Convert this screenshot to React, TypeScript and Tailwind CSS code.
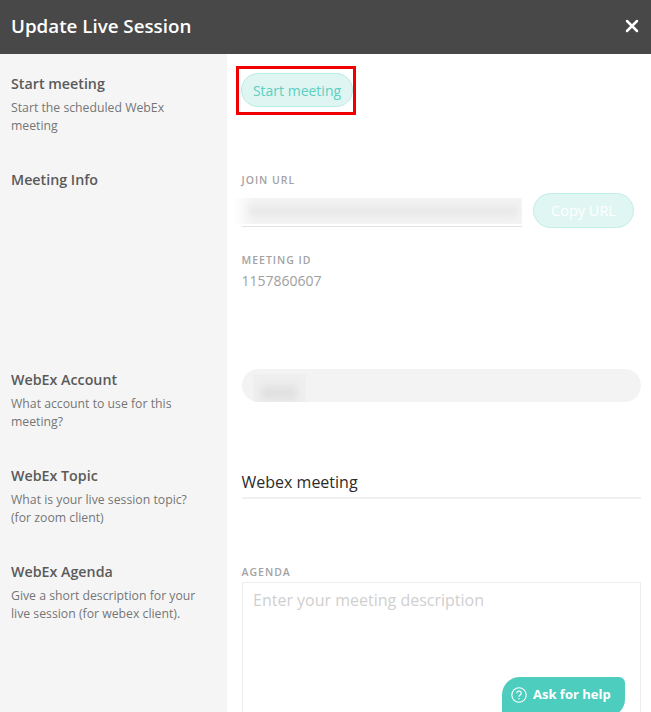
import React from 'react';
import { X } from 'lucide-react';

function SideInfo({ title, children }: { title: string; children?: React.ReactNode }) {
  return (
    <div className="w-[227px] shrink-0 bg-[#f5f5f5] pl-[11px] pr-[28px] pt-[20px]">
      <h3 className="text-[14.25px] leading-[20px] font-semibold text-[#5a5a5a]">{title}</h3>
      {children && <p className="mt-[5px] text-[12.25px] leading-[18px] text-[#757575]">{children}</p>}
    </div>
  );
}

function FieldLabel({ children }: { children: React.ReactNode }) {
  return <div className="text-[10.5px] leading-[14px] font-semibold tracking-[1px] text-[#a3a3a3] uppercase">{children}</div>;
}

export default function App() {
  return (
    <div className="relative h-[712px] w-[651px] overflow-hidden bg-white font-['Open_Sans',sans-serif]">
      <header className="flex h-[54px] items-center justify-between bg-[#484848] pl-[11px] pr-[9.5px]">
        <h1 className="mt-[-2px] text-[18.75px] font-semibold text-white">Update Live Session</h1>
        <X className="mt-[-3px] h-[20px] w-[20px] text-white" strokeWidth={3} />
      </header>

      <div className="flex h-[96px]">
        <SideInfo title="Start meeting">Start the scheduled WebEx meeting</SideInfo>
        <div className="pl-[9px] pt-[12px]">
          <div className="h-[49px] w-[120px] border-[3px] border-[#f00000] pl-[2px] pt-[4px]">
            <button className="h-[34px] w-[112px] rounded-full border border-[#b8ece5] bg-[#def5f2] text-[14px] text-[#5ccfc1]">
              Start meeting
            </button>
          </div>
        </div>
      </div>

      <div className="flex h-[200px]">
        <SideInfo title="Meeting Info" />
        <div className="flex-1 pl-[14.5px] pt-[23px]">
          <FieldLabel>Join URL</FieldLabel>
          <div className="mt-[11px] flex items-start">
            <div className="h-[29px] w-[280px] border-b border-[#e3e3e3]">
              <div className="-ml-[10px] h-[26px] w-[290px] overflow-hidden bg-gradient-to-r from-white to-[#f4f4f4] to-[8%] pt-[7px] pl-[16px]">
                <div className="h-[12px] w-[270px] bg-[#e8e8e8] blur-[4px]" />
              </div>
            </div>
            <button className="ml-[11.5px] mt-[-5px] h-[35px] w-[101px] rounded-full border border-[#c2eee8] bg-[#e0f6f3] text-[14.5px] text-white">
              Copy URL
            </button>
          </div>
          <div className="mt-[25px]">
            <FieldLabel>Meeting ID</FieldLabel>
            <div className="mt-[4px] text-[14px] leading-[20px] text-[#a0a0a0]">1157860607</div>
          </div>
        </div>
      </div>

      <div className="flex h-[96px]">
        <SideInfo title="WebEx Account">What account to use for this meeting?</SideInfo>
        <div className="flex-1 pl-[14.5px] pr-[10px] pt-[19px]">
          <div className="h-[33px] overflow-hidden rounded-full bg-[#f3f3f3] pl-[11px] pt-[5px]">
            <div className="h-[28px] w-[53px] overflow-hidden bg-[#efefef]">
              <div className="ml-[8px] mt-[12px] h-[14px] w-[36px] bg-[#e0e0e0] blur-[4px]" />
            </div>
          </div>
        </div>
      </div>

      <div className="flex h-[96px]">
        <SideInfo title="WebEx Topic">What is your live session topic? (for zoom client)</SideInfo>
        <div className="flex-1 pl-[14.5px] pr-[10px] pt-[23px]">
          <div className="h-[30px] border-b-2 border-[#f0f0f0] text-[16px] leading-[26px] text-[#2b2b2b]">Webex meeting</div>
        </div>
      </div>

      <div className="flex h-[170px]">
        <SideInfo title="WebEx Agenda">Give a short description for your live session (for webex client).</SideInfo>
        <div className="flex-1 pl-[14.5px] pr-[10px] pt-[23px]">
          <FieldLabel>Agenda</FieldLabel>
          <div className="mt-[3px] h-[200px] border border-[#eeeeee] px-[10.5px] py-[6px] text-[16px] leading-[22px] text-[#d0d0d0]">
            Enter your meeting description
          </div>
        </div>
      </div>

      <button className="absolute left-[502px] top-[677px] flex h-[40px] w-[123px] items-start rounded-tl-[18px] rounded-tr-[6px] rounded-br-[18px] bg-[#4ccdbe] pl-[9px] pt-[8px] text-[13px] font-bold text-white">
        <svg className="mr-[6px] mt-[2px] h-[16px] w-[16px]" viewBox="0 0 16 16" fill="none" stroke="currentColor" strokeWidth="1.1">
          <circle cx="8" cy="8" r="7.2" />
          <path d="M5.8 6.2a2.2 2.2 0 1 1 3.4 1.9c-.8.5-1.2.9-1.2 1.7" strokeWidth="1.2" />
          <circle cx="8" cy="11.8" r=".7" fill="currentColor" stroke="none" />
        </svg>
        <span className="leading-[19px]">Ask for help</span>
      </button>
    </div>
  );
}
